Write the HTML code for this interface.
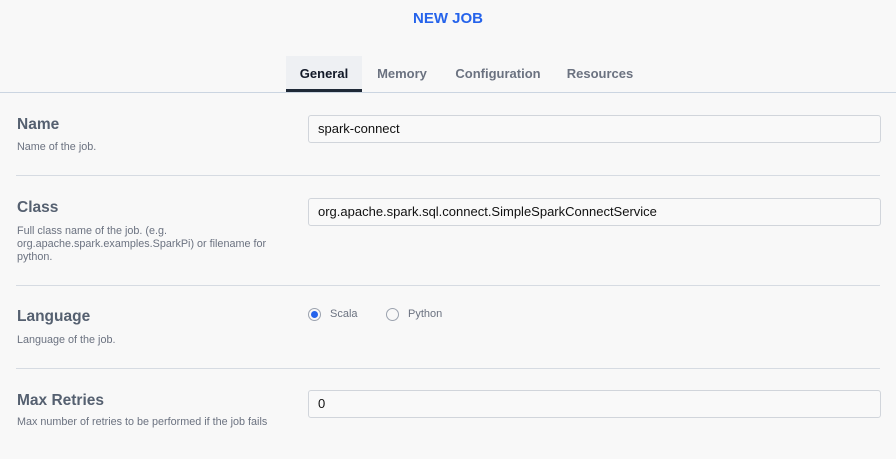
<!DOCTYPE html>
<html><head><style>
body{margin:0;width:896px;height:459px;background:#f8f8f8;font-family:"Liberation Sans",sans-serif;position:relative;overflow:hidden}
.a{position:absolute}
.title{left:0;width:896px;top:10px;text-align:center;color:#2563eb;font-weight:bold;font-size:15px}
.tab{top:56px;height:36px;line-height:36px;font-size:13px;font-weight:bold;color:#6b7280;text-align:center}
.lbl{left:17px;font-size:15.5px;font-weight:bold;color:#556070}
.desc{left:17px;font-size:10.8px;color:#6b7280;line-height:13px;width:262px}
.inp{left:308px;width:562px;height:26px;border:1px solid #d1d5db;border-radius:3px;background:#f9f9f9;font-size:13px;line-height:26px;padding-left:9px;color:#111}
.sep{left:16px;width:864px;height:1px;background:#d6dbe2}
.rad{width:13px;height:13px;border:1px solid #9ca3af;border-radius:50%;box-sizing:border-box;top:308px}
.rt{top:308px;font-size:11px;color:#6b7280}
</style></head><body>
<div class="a title">NEW JOB</div>
<div class="a tab" style="left:286px;width:76px;background:#eef0f3;color:#111827">General</div>
<div class="a" style="left:286px;width:76px;top:89px;height:3px;background:#1f2937"></div>
<div class="a tab" style="left:366px;width:72px">Memory</div>
<div class="a tab" style="left:448px;width:100px">Configuration</div>
<div class="a tab" style="left:558px;width:84px">Resources</div>
<div class="a" style="left:0;width:896px;top:92px;height:1px;background:#cbd5e1"></div>

<div class="a lbl" style="top:116px">Name</div>
<div class="a desc" style="top:141px">Name of the job.</div>
<div class="a inp" style="top:115px">spark-connect</div>
<div class="a sep" style="top:175px"></div>

<div class="a lbl" style="top:199px">Class</div>
<div class="a desc" style="top:225px">Full class name of the job. (e.g. org.apache.spark.examples.SparkPi) or filename for python.</div>
<div class="a inp" style="top:198px">org.apache.spark.sql.connect.SimpleSparkConnectService</div>
<div class="a sep" style="top:285px"></div>

<div class="a lbl" style="top:308px">Language</div>
<div class="a desc" style="top:334px">Language of the job.</div>
<div class="a rad" style="left:308px;display:flex;align-items:center;justify-content:center"><div style="width:7px;height:7px;border-radius:50%;background:#2563eb"></div></div>
<div class="a rt" style="left:330px">Scala</div>
<div class="a rad" style="left:386px"></div>
<div class="a rt" style="left:408px">Python</div>
<div class="a sep" style="top:368px"></div>

<div class="a lbl" style="top:392px">Max Retries</div>
<div class="a desc" style="top:416px;width:300px">Max number of retries to be performed if the job fails</div>
<div class="a inp" style="top:390px">0</div>
</body></html>
